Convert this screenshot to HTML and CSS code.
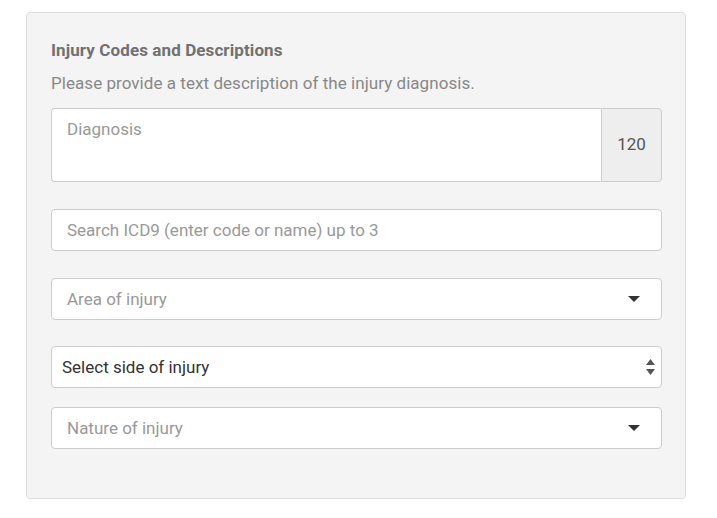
FILE: index.html
```html
<!DOCTYPE html>
<html>
<head>
<meta charset="utf-8">
<link rel="stylesheet" href="styles.css">
</head>
<body>
<div class="panel">
  <div class="title">Injury Codes and Descriptions</div>
  <div class="subtitle">Please provide a text description of the injury diagnosis.</div>
  <div class="group">
    <div class="textarea"><span class="ph">Diagnosis</span></div>
    <div class="addon">120</div>
  </div>
  <div class="field search"><span class="ph">Search ICD9 (enter code or name) up to 3</span></div>
  <div class="field area">
    <span class="ph">Area of injury</span>
    <svg class="caret" width="12" height="6" viewBox="0 0 12 6"><path d="M0 0H12L6 6Z" fill="#333"/></svg>
  </div>
  <div class="field native">
    <span class="val">Select side of injury</span>
    <svg class="spin" width="9" height="16" viewBox="0 0 9 16"><path d="M4.5 0L9 6H0Z M0 10H9L4.5 16Z" fill="#555"/></svg>
  </div>
  <div class="field nature">
    <span class="ph">Nature of injury</span>
    <svg class="caret" width="12" height="6" viewBox="0 0 12 6"><path d="M0 0H12L6 6Z" fill="#333"/></svg>
  </div>
</div>
</body>
</html>
```
FILE: styles.css
```css
body {
  margin: 0;
  background: #fff;
  font-family: Roboto, "Liberation Sans", sans-serif;
}
.panel {
  box-sizing: border-box;
  width: 660px;
  margin: 12px 0 0 26px;
  height: 487px;
  border: 1px solid #ddd;
  border-radius: 4px;
  background: #f4f4f4;
  padding: 26px 23px 0 24px;
}
.title {
  font-size: 17px;
  font-weight: bold;
  color: #717171;
  line-height: 22px;
  letter-spacing: 0.1px;
}
.subtitle {
  font-size: 17px;
  color: #888;
  line-height: 22px;
  margin-top: 11px;
  letter-spacing: 0.05px;
}
.group {
  display: flex;
  height: 74px;
  margin-top: 14px;
}
.textarea {
  flex: 1;
  box-sizing: border-box;
  background: #fff;
  border: 1px solid #ccc;
  border-right: none;
  border-radius: 4px 0 0 4px;
  padding: 9px 15px;
  font-size: 17px;
  line-height: 22px;
}
.addon {
  box-sizing: border-box;
  width: 61px;
  background: #eee;
  border: 1px solid #ccc;
  border-radius: 0 4px 4px 0;
  display: flex;
  align-items: center;
  justify-content: center;
  font-size: 17px;
  color: #555;
  padding-bottom: 2px;
}
.ph { color: #999; }
.field {
  box-sizing: border-box;
  height: 42px;
  background: #fff;
  border: 1px solid #ccc;
  border-radius: 4px;
  display: flex;
  align-items: center;
  justify-content: space-between;
  padding: 0 21px 0 15px;
  font-size: 17px;
}
.search { margin-top: 27px; }
.area { margin-top: 27px; }
.native { margin-top: 26px; padding: 0 6px 0 10px; }
.nature { margin-top: 19px; }
.val { color: #333; }
.caret { display: block; }
.spin { display: block; }
```
